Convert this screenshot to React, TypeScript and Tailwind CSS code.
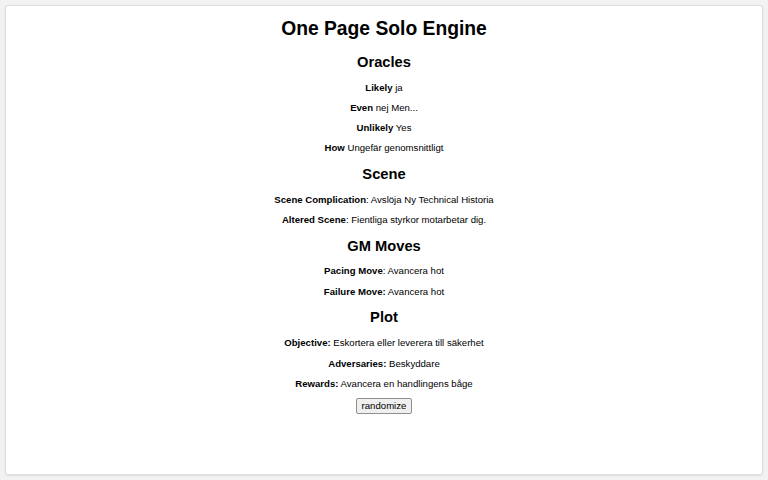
export default function App() {
  const sections = [
    {
      title: "Oracles",
      head: "mt-[12px]",
      body: "mt-[11px] gap-[8px]",
      rows: [
        ["Likely", " ja"],
        ["Even", " nej Men..."],
        ["Unlikely", " Yes"],
        ["How", " Ungefär genomsnittligt"],
      ],
    },
    {
      title: "Scene",
      head: "mt-[11px]",
      body: "mt-[11px] gap-[8px]",
      rows: [
        ["Scene Complication", ": Avslöja Ny Technical Historia"],
        ["Altered Scene", ": Fientliga styrkor motarbetar dig."],
      ],
    },
    {
      title: "GM Moves",
      head: "mt-[11px]",
      body: "mt-[10px] gap-[9px]",
      rows: [
        ["Pacing Move", ": Avancera hot"],
        ["Failure Move:", " Avancera hot"],
      ],
    },
    {
      title: "Plot",
      head: "mt-[10px]",
      body: "mt-[11px] gap-[8.5px]",
      rows: [
        ["Objective:", " Eskortera eller leverera till säkerhet"],
        ["Adversaries:", " Beskyddare"],
        ["Rewards:", " Avancera en handlingens båge"],
      ],
    },
  ];

  return (
    <div className="h-[480px] bg-[#f2f2f2] p-[5px] font-['Liberation_Sans',Arial,sans-serif] text-black">
      <div className="flex h-full flex-col items-center rounded-[3px] border border-[#dcdcdc] bg-white pt-[11px] shadow-[0_1px_2px_rgba(0,0,0,0.08)]">
        <h1 className="text-[19.3px] font-bold leading-[24px]">One Page Solo Engine</h1>
        {sections.map((s) => (
          <div key={s.title} className="flex flex-col items-center">
            <h2 className={`${s.head} text-[14.7px] font-bold leading-[18px]`}>{s.title}</h2>
            <div className={`${s.body} flex flex-col items-center`}>
              {s.rows.map(([k, v]) => (
                <p key={k} className="text-[9.6px] leading-[12px]">
                  <b>{k}</b>
                  {v}
                </p>
              ))}
            </div>
          </div>
        ))}
        <button className="mt-[8px] rounded-[2px] border border-[#8f8f8f] bg-[#efefef] px-[5px] text-[9.6px] leading-[14px]">
          randomize
        </button>
      </div>
    </div>
  );
}
